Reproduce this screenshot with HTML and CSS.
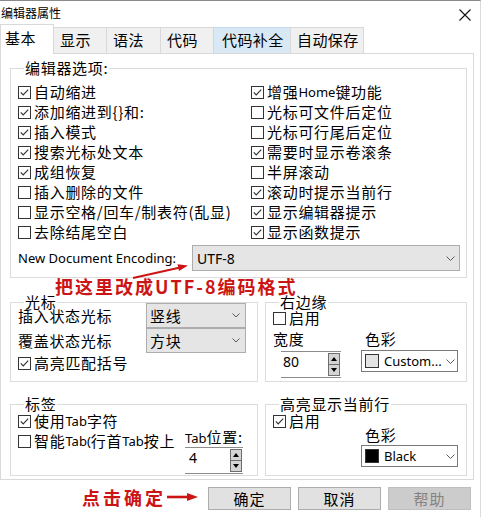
FILE: index.html
```html
<!DOCTYPE html>
<html lang="zh-CN">
<head>
<meta charset="utf-8">
<title>编辑器属性</title>
<link rel="stylesheet" href="styles.css">
</head>
<body>
<div class="dialog">
  <div class="titlebar">
    <span class="title">编辑器属性</span>
    <svg class="close" width="12" height="12" viewBox="0 0 12 12"><path d="M0.5 0.5L11.5 11.5M11.5 0.5L0.5 11.5" stroke="#111" stroke-width="1.1" fill="none"/></svg>
  </div>
  <div class="tabs">
    <div class="tab active w54">基本</div>
    <div class="tab w54">显示</div>
    <div class="tab w55">语法</div>
    <div class="tab w54">代码</div>
    <div class="tab hover w78">代码补全</div>
    <div class="tab w74">自动保存</div>
  </div>
  <div class="panel">
    <div class="group editor">
      <div class="gtitle gt-editor">编辑器选项:</div>
      <div class="opts">
        <div class="cb-row"><span class="cb"><svg viewBox="0 0 11 11"><path d="M1.8 5.4L4.2 7.9L9.2 2.6"/></svg></span>自动缩进</div>
        <div class="cb-row"><span class="cb"><svg viewBox="0 0 11 11"><path d="M1.8 5.4L4.2 7.9L9.2 2.6"/></svg></span>添加缩进到{}和:</div>
        <div class="cb-row"><span class="cb"><svg viewBox="0 0 11 11"><path d="M1.8 5.4L4.2 7.9L9.2 2.6"/></svg></span>插入模式</div>
        <div class="cb-row"><span class="cb"><svg viewBox="0 0 11 11"><path d="M1.8 5.4L4.2 7.9L9.2 2.6"/></svg></span>搜索光标处文本</div>
        <div class="cb-row"><span class="cb"><svg viewBox="0 0 11 11"><path d="M1.8 5.4L4.2 7.9L9.2 2.6"/></svg></span>成组恢复</div>
        <div class="cb-row"><span class="cb"></span>插入删除的文件</div>
        <div class="cb-row"><span class="cb"></span>显示空格/回车/制表符(乱显)</div>
        <div class="cb-row"><span class="cb"></span>去除结尾空白</div>
        <div class="cb-row"><span class="cb"><svg viewBox="0 0 11 11"><path d="M1.8 5.4L4.2 7.9L9.2 2.6"/></svg></span>增强<span class="latin">Home</span>键功能</div>
        <div class="cb-row"><span class="cb"></span>光标可文件后定位</div>
        <div class="cb-row"><span class="cb"></span>光标可行尾后定位</div>
        <div class="cb-row"><span class="cb"><svg viewBox="0 0 11 11"><path d="M1.8 5.4L4.2 7.9L9.2 2.6"/></svg></span>需要时显示卷滚条</div>
        <div class="cb-row"><span class="cb"></span>半屏滚动</div>
        <div class="cb-row"><span class="cb"><svg viewBox="0 0 11 11"><path d="M1.8 5.4L4.2 7.9L9.2 2.6"/></svg></span>滚动时提示当前行</div>
        <div class="cb-row"><span class="cb"><svg viewBox="0 0 11 11"><path d="M1.8 5.4L4.2 7.9L9.2 2.6"/></svg></span>显示编辑器提示</div>
        <div class="cb-row"><span class="cb"><svg viewBox="0 0 11 11"><path d="M1.8 5.4L4.2 7.9L9.2 2.6"/></svg></span>显示函数提示</div>
      </div>
      <div class="enc-row">
        <span class="enc-label">New Document Encoding:</span>
        <div class="combo enc"><span>UTF-8</span><svg class="chev" width="9" height="5" viewBox="0 0 9 5"><path d="M0.5 0.5L4.5 4.5L8.5 0.5"/></svg></div>
      </div>
    </div>

    <div class="row mid">
      <div class="group cursor">
        <div class="gtitle gt-cursor">光标</div>
        <div class="cgrid">
          <span class="lbl clbl">插入状态光标</span>
          <div class="combo csel"><span>竖线</span><svg class="chev" width="8" height="5" viewBox="0 0 8 5"><path d="M0.5 0.5L4 4L7.5 0.5"/></svg></div>
          <span class="lbl clbl">覆盖状态光标</span>
          <div class="combo csel"><span>方块</span><svg class="chev" width="8" height="5" viewBox="0 0 8 5"><path d="M0.5 0.5L4 4L7.5 0.5"/></svg></div>
          <div class="cb-row span2"><span class="cb"><svg viewBox="0 0 11 11"><path d="M1.8 5.4L4.2 7.9L9.2 2.6"/></svg></span>高亮匹配括号</div>
        </div>
      </div>
      <div class="group margin">
        <div class="gtitle gt-margin">右边缘</div>
        <div class="mgrid">
          <div class="cb-row span2"><span class="cb"></span>启用</div>
          <span class="lbl">宽度</span>
          <span class="lbl indent">色彩</span>
          <div class="spin w-80">
            <span class="val">80</span>
            <div class="spin-btns"><span class="sbtn up"></span><span class="sbtn down"></span></div>
          </div>
          <div class="ccombo"><span class="swatch light"></span><span class="ctext">Custom...</span><svg class="chev" width="9" height="5" viewBox="0 0 9 5"><path d="M0.5 0.5L4.5 4.5L8.5 0.5"/></svg></div>
        </div>
      </div>
    </div>

    <div class="row bot">
      <div class="group tags">
        <div class="gtitle gt-small">标签</div>
        <div class="tflex">
          <div class="tcol">
            <div class="cb-row"><span class="cb"><svg viewBox="0 0 11 11"><path d="M1.8 5.4L4.2 7.9L9.2 2.6"/></svg></span>使用<span class="latin">Tab</span>字符</div>
            <div class="cb-row"><span class="cb"></span>智能<span class="latin">Tab(</span>行首<span class="latin">Tab</span>按上</div>
          </div>
          <div class="tpos">
            <span class="tlabel"><span class="latin">Tab</span>位置:</span>
            <div class="spin w-tab">
              <span class="val">4</span>
              <div class="spin-btns"><span class="sbtn up"></span><span class="sbtn down"></span></div>
            </div>
          </div>
        </div>
      </div>
      <div class="group hl">
        <div class="gtitle gt-small">高亮显示当前行</div>
        <div class="hflex">
          <div class="hcol1">
            <div class="cb-row"><span class="cb"><svg viewBox="0 0 11 11"><path d="M1.8 5.4L4.2 7.9L9.2 2.6"/></svg></span>启用</div>
          </div>
          <div class="hcol2">
            <span class="lbl hlabel">色彩</span>
            <div class="ccombo"><span class="swatch dark"></span><span class="ctext">Black</span><svg class="chev" width="9" height="5" viewBox="0 0 9 5"><path d="M0.5 0.5L4.5 4.5L8.5 0.5"/></svg></div>
          </div>
        </div>
      </div>
    </div>
  </div>

  <div class="footer">
    <span class="note">点击确定</span>
    <svg class="farrow" width="31" height="10" viewBox="0 0 31 10"><path d="M0 5H22" stroke="#cc1414" stroke-width="2.6"/><polygon points="31,5 20,1 20,9" fill="#cc1414"/></svg>
    <button class="btn">确定</button>
    <button class="btn">取消</button>
    <button class="btn disabled">帮助</button>
  </div>

  <div class="note1">把这里改成UTF-8编码格式</div>
  <svg class="arrow1" width="62" height="22" viewBox="0 0 62 22"><path d="M3 19L49 8.8" stroke="#cc1414" stroke-width="2"/><polygon points="58,6.5 49,12.1 47.5,5.3" fill="#cc1414"/></svg>
</div>
</body>
</html>
```
FILE: styles.css
```css
* { box-sizing: border-box; }
html, body { margin: 0; padding: 0; background: #fff; }
body {
  width: 481px;
  height: 517px;
  overflow: hidden;
  font-family: "Noto Sans CJK SC", "Noto Sans", sans-serif;
  font-size: 15px;
  color: #000;
}
.dialog {
  position: relative;
  width: 481px;
  height: 517px;
  border-top: 1px solid #8a8a8a;
  border-right: 1px solid #dadada;
}

/* title bar */
.titlebar {
  height: 23px;
  display: flex;
  align-items: flex-start;
  justify-content: space-between;
  padding: 0 9px 0 1px;
}
.title { font-size: 12px; line-height: 14px; margin-top: 5px; }
.close { display: block; margin-top: 8px; }

/* tabs */
.tabs { display: flex; align-items: flex-end; height: 29px; }
.tab {
  height: 26px;
  border: 1px solid #d9d9d9;
  border-bottom: none;
  background: #f0f0f0;
  margin-left: -1px;
  padding-left: 6px;
  line-height: 23px;
  letter-spacing: 0.4px;
  white-space: nowrap;
}
.tab.active {
  height: 30px;
  margin-left: 0;
  margin-bottom: -1px;
  background: #fff;
  position: relative;
  line-height: 25px;
  padding-left: 4px;
}
.tab.hover { background: #d9e8f5; border-color: #c4d9ec; padding-left: 8px; }
.w54 { width: 54px; }
.w55 { width: 55px; }
.w78 { width: 78px; }
.w74 { width: 74px; }

/* panel */
.panel {
  width: 474px;
  border: 1px solid #d9d9d9;
  padding: 14px 6px 3px 9px;
}
.group {
  border: 1px solid #dcdcdc;
  padding: 0 6px 0 7px;
}
.gtitle {
  width: max-content;
  margin: -6px 0 0 6px;
  padding: 0 1px;
  line-height: 10px;
  height: 10px;
  background: #fff;
  letter-spacing: 0.7px;
}
.gt-editor { margin-bottom: 9px; }
.gt-cursor { margin-bottom: -4px; }
.gt-margin { margin-bottom: 1px; }
.gt-small { margin-bottom: 2px; }

.editor { padding-bottom: 6px; }
.opts {
  display: grid;
  grid-template-columns: 233px 1fr;
  grid-template-rows: repeat(8, 20px);
  grid-auto-flow: column;
}
.cb-row {
  display: flex;
  align-items: center;
  height: 20px;
  line-height: 20px;
  white-space: nowrap;
  letter-spacing: 0.7px;
}
.cb {
  flex: none;
  width: 13px;
  height: 13px;
  border: 1px solid #333;
  background: #fff;
  margin-right: 3px;
}
.cb svg { display: block; width: 11px; height: 11px; }
.cb path { fill: none; stroke: #333; stroke-width: 1.2; }
.latin { font-family: "Noto Sans", sans-serif; font-size: 13px; letter-spacing: 0; }

.enc-row { display: flex; align-items: center; height: 26px; margin-top: 3px; }
.enc-label { width: 174px; font-family: "Noto Sans", sans-serif; font-size: 13px; }
.combo {
  display: flex;
  align-items: center;
  justify-content: space-between;
  border: 1px solid #adadad;
  background: #e5e5e5;
  padding: 0 4px;
}
.enc { width: 268px; height: 26px; font-family: "Noto Sans", sans-serif; font-size: 14px; }
.chev { display: block; flex: none; }
.chev path { fill: none; stroke: #5a5a5a; stroke-width: 1; }

.row { display: flex; gap: 7px; }
.mid { margin-top: 24px; }
.bot { margin-top: 22px; }
.mid .group { height: 80px; }
.bot .group { height: 72px; }
.cursor, .tags { width: 248px; }
.margin, .hl { width: 202px; }

.lbl { line-height: 22px; letter-spacing: 0.7px; white-space: nowrap; }
.clbl { line-height: 16px; }
.cgrid {
  display: grid;
  grid-template-columns: 128px 100px;
  grid-template-rows: 25px 25px 20px;
  align-items: center;
}
.csel { height: 25px; padding: 0 5px 0 3px; letter-spacing: 0.7px; }
.span2 { grid-column: 1 / span 2; }

.mgrid {
  display: grid;
  grid-template-columns: 88px 1fr;
  grid-template-rows: 20px 22px 28px;
}
.indent { margin-left: 4px; }
.spin {
  display: flex;
  align-items: flex-start;
  border-top: 1px solid #8c8c8c;
  border-bottom: 1px solid #8c8c8c;
  height: 27px;
}
.w-80 { width: 60px; margin-left: 8px; margin-top: 1px; }
.w-tab { width: 58px; }
.val {
  flex: 1;
  padding-left: 2px;
  line-height: 20px;
  font-family: "Noto Sans", sans-serif;
  font-size: 14px;
}
.w-tab .val { padding-left: 4px; }
.spin-btns { display: flex; flex-direction: column; align-self: center; margin-right: 1px; }
.sbtn {
  width: 12px;
  height: 12px;
  background: #d4d4d4;
  border: 1px solid #6e6e6e;
  display: flex;
  align-items: center;
  justify-content: center;
}
.sbtn + .sbtn { margin-top: -1px; }
.sbtn.up::before {
  content: "";
  border-left: 3.5px solid transparent;
  border-right: 3.5px solid transparent;
  border-bottom: 4px solid #000;
}
.sbtn.down::before {
  content: "";
  border-left: 3.5px solid transparent;
  border-right: 3.5px solid transparent;
  border-top: 4px solid #000;
}
.ccombo {
  display: flex;
  align-items: center;
  width: 97px;
  height: 22px;
  border: 1px solid #7a7a7a;
  background: #fff;
  padding: 0 2px 0 3px;
}
.swatch { flex: none; width: 14px; height: 14px; border: 1px solid #333; margin-right: 5px; }
.swatch.light { background: #e3e3e3; }
.swatch.dark { background: #000; }
.ctext { flex: 1; font-family: "Noto Sans", sans-serif; font-size: 13px; }

.tflex { display: flex; }
.tcol { width: 167px; }
.tpos { display: flex; flex-direction: column; margin-top: 17px; }
.tlabel { line-height: 18px; letter-spacing: 0.7px; white-space: nowrap; }

.hflex { display: flex; }
.hcol1 { width: 88px; }
.hcol2 { display: flex; flex-direction: column; }
.hlabel { margin: 17px 0 0 4px; line-height: 14px; }
.hcol2 .ccombo { margin-top: 3px; }

/* footer */
.footer {
  display: flex;
  align-items: center;
  justify-content: flex-end;
  height: 23px;
  margin-top: 7px;
  padding-right: 9px;
}
.note {
  color: #cc1414;
  font-weight: 700;
  font-size: 18px;
  letter-spacing: 3px;
  margin-right: 1px;
  margin-top: -4px;
}
.farrow { display: block; margin: -4px 10px 0 0; }
.btn {
  width: 83px;
  height: 23px;
  border: 1px solid #adadad;
  background: #e1e1e1;
  font-family: "Noto Sans CJK SC", sans-serif;
  font-size: 15px;
  letter-spacing: 1px;
  color: #000;
  padding: 0;
  margin: 0;
}
.btn + .btn { margin-left: 7px; }
.btn.disabled { background: #cccccc; border-color: #bfbfbf; color: #838383; }

/* annotation overlays */
.note1 {
  position: absolute;
  left: 55px;
  top: 276px;
  color: #cc1414;
  font-weight: 700;
  font-size: 18px;
  letter-spacing: 2px;
  line-height: 18px;
  white-space: nowrap;
}
.arrow1 { position: absolute; left: 130px; top: 258px; }
```
